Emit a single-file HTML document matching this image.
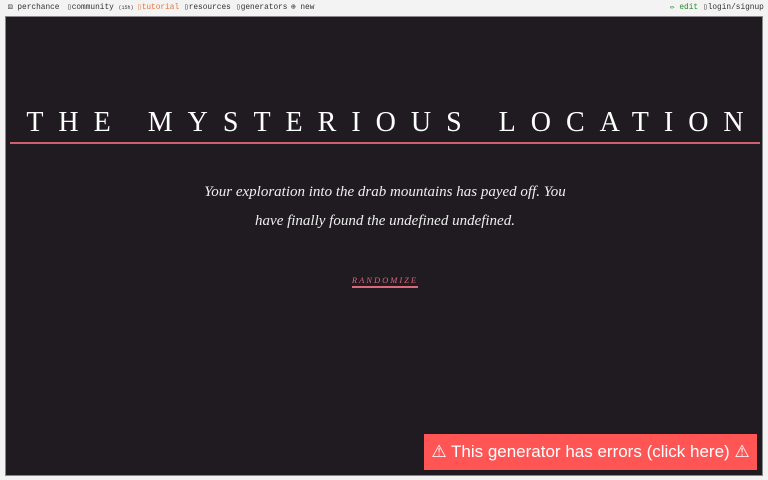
<!DOCTYPE html>
<html><head><meta charset="utf-8"><style>
*{margin:0;padding:0;box-sizing:border-box}
body{width:768px;height:480px;background:#f3f3f3;position:relative;overflow:hidden;font-family:"Liberation Mono",monospace}
.nav{position:absolute;top:0;left:0;width:768px;height:16px;font-size:7.8px;color:#333;line-height:16px}
.nav span{position:absolute;top:0;white-space:nowrap}
.frame{position:absolute;left:5px;top:16px;width:758px;height:460px;background:#1f1b20;border:1px solid #888}
h1{position:absolute;left:0;top:90px;width:758px;text-align:center;font-family:"Liberation Serif",serif;font-weight:normal;color:#fff;font-size:28px;letter-spacing:15px;padding-left:15px;white-space:nowrap;line-height:32px}
.line{position:absolute;left:4px;top:125px;width:750px;height:2px;background:#d06070}
.p{position:absolute;left:0;top:161px;width:758px;text-align:center;font-family:"Liberation Serif",serif;font-style:italic;color:#eee;font-size:15px;line-height:29px}
.r{position:absolute;left:0;top:258px;width:758px;text-align:center;font-family:"Liberation Serif",serif;font-style:italic;font-size:8.5px;letter-spacing:2px;color:#d86a7a}
.r span{border-bottom:2px solid #d86a7a;padding-bottom:1px}
.err{position:absolute;left:424px;top:434px;width:333px;height:36px;background:#f55;color:#fff;font-family:"Liberation Sans",sans-serif;font-size:17px;line-height:36px;text-align:center}
</style></head><body>
<div class="nav">
<span style="left:8px">⚄ perchance</span>
<span style="left:67px">▯community <small style="font-size:5px">(15h)</small></span>
<span style="left:137px;color:#e8743a">▯tutorial</span>
<span style="left:184px">▯resources</span>
<span style="left:236px">▯generators</span>
<span style="left:291px">⊕ new</span>
<span style="left:670px;color:#2a8a2a">✏ edit</span>
<span style="left:703px">▯login/signup</span>
</div>
<div class="frame">
<h1>THE MYSTERIOUS LOCATION</h1>
<div class="line"></div>
<div class="p">Your exploration into the drab mountains has payed off. You<br>have finally found the undefined undefined.</div>
<div class="r"><span>RANDOMIZE</span></div>
</div>
<div class="err">⚠ This generator has errors (click here) ⚠</div>
</body></html>
